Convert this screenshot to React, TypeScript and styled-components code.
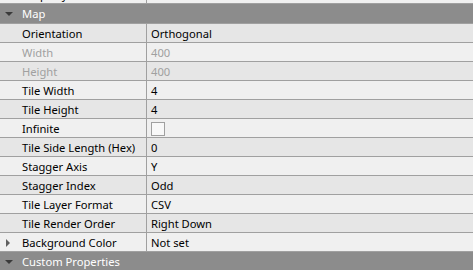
import React from "react";
import styled, { createGlobalStyle } from "styled-components";

const Global = createGlobalStyle`
  html, body { margin: 0; padding: 0; background: #f0f0f0; }
  body { font-family: "Noto Sans", "Open Sans", sans-serif; font-size: 11.2px; }
`;

const Panel = styled.div`
  width: 473px;
  height: 270px;
  overflow: hidden;
  display: flex;
  flex-direction: column;
  background: #f0f0f0;
`;

const Row = styled.div<{ $alt?: boolean; $h?: number }>`
  display: grid;
  grid-template-columns: 147px 1fr;
  height: ${(p) => p.$h ?? 18}px;
  flex: none;
  border-bottom: 1px solid #a0a0a0;
  background: ${(p) => (p.$alt ? "#e6e6e6" : "#f0f0f0")};
  overflow: hidden;
`;

const Cell = styled.div<{ $first?: boolean; $dim?: boolean }>`
  display: flex;
  align-items: center;
  position: relative;
  padding-left: ${(p) => (p.$first ? 22 : 4)}px;
  padding-top: 1px;
  border-right: ${(p) => (p.$first ? "1px solid #a0a0a0" : "none")};
  color: ${(p) => (p.$dim ? "#a0a0a0" : "#000")};
  white-space: nowrap;
  line-height: 17px;
`;

const TopCell = styled(Cell)`
  align-items: flex-end;
  padding-top: 0;
  overflow: hidden;
`;

const TopText = styled.span`
  display: block;
  flex: none;
  height: 18px;
  line-height: 18px;
  margin-bottom: -1px;
`;

const Group = styled.div`
  display: flex;
  align-items: center;
  flex: none;
  background: #8c8c8c;
  color: #ffffff;
  padding-left: 5px;
  box-sizing: border-box;
  gap: 9px;
  border-bottom: 1px solid #a0a0a0;
  height: 20px;
`;

const DownArrow = styled.span`
  width: 0;
  height: 0;
  border-left: 4px solid transparent;
  border-right: 4px solid transparent;
  border-top: 4px solid #3a3a3a;
`;

const RightArrow = styled.span`
  position: absolute;
  left: 6px;
  top: 6px;
  width: 0;
  height: 0;
  border-top: 4px solid transparent;
  border-bottom: 4px solid transparent;
  border-left: 4px solid #606060;
`;

const Check = styled.span`
  border: 1px solid #a0a0a0;
  background: #f8f8f8;
  box-sizing: border-box;
  width: 14px;
  height: 14px;
`;

type Prop = { name: string; value?: string; dim?: boolean; check?: boolean; expand?: boolean };

const props: Prop[] = [
  { name: "Orientation", value: "Orthogonal" },
  { name: "Width", value: "400", dim: true },
  { name: "Height", value: "400", dim: true },
  { name: "Tile Width", value: "4" },
  { name: "Tile Height", value: "4" },
  { name: "Infinite", check: true },
  { name: "Tile Side Length (Hex)", value: "0" },
  { name: "Stagger Axis", value: "Y" },
  { name: "Stagger Index", value: "Odd" },
  { name: "Tile Layer Format", value: "CSV" },
  { name: "Tile Render Order", value: "Right Down" },
  { name: "Background Color", value: "Not set", expand: true },
];

export default function App() {
  return (
    <>
      <Global />
      <Panel>
        <Row $h={3}>
          <TopCell $first>
            <TopText>Property</TopText>
          </TopCell>
          <TopCell>
            <TopText> </TopText>
          </TopCell>
        </Row>
        <Group>
          <DownArrow />
          <span>Map</span>
        </Group>
        {props.map((p, i) => (
          <Row key={p.name} $alt={i % 2 === 0}>
            <Cell $first $dim={p.dim}>
              {p.expand && <RightArrow />}
              {p.name}
            </Cell>
            <Cell $dim={p.dim}>{p.check ? <Check /> : p.value}</Cell>
          </Row>
        ))}
        <Group>
          <DownArrow />
          <span>Custom Properties</span>
        </Group>
      </Panel>
    </>
  );
}
